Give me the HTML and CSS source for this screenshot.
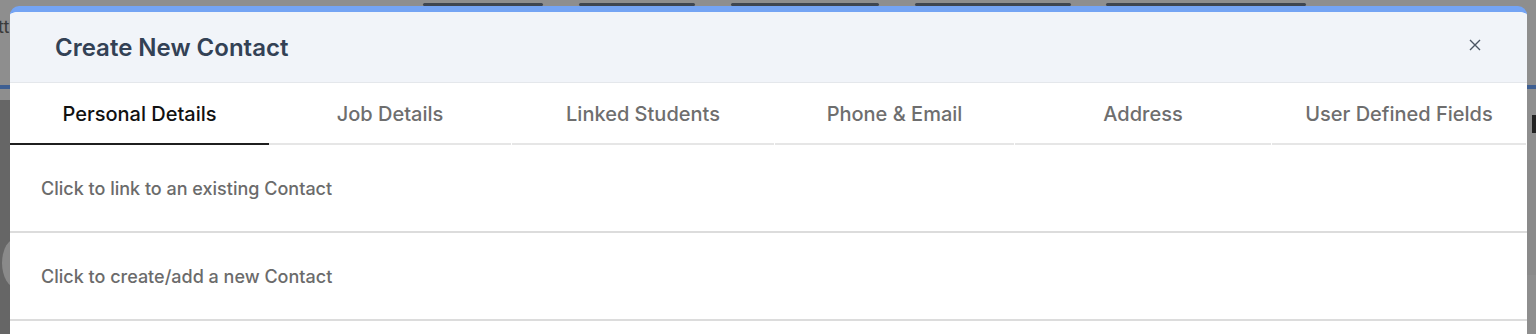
FILE: index.html
```html
<!DOCTYPE html>
<html lang="en">
<head>
<meta charset="utf-8">
<title>Create New Contact</title>
<link rel="stylesheet" href="styles.css">
</head>
<body>
<div class="backdrop">
  <span class="bg-text">tt</span>
  <span class="bg-btn b1"></span>
  <span class="bg-btn b2"></span>
  <span class="bg-btn b3"></span>
  <span class="bg-btn b4"></span>
  <span class="bg-btn b5"></span>
  <span class="bg-stripe left"></span>
  <span class="bg-stripe right"></span>
  <span class="bg-panel left"></span>
  <span class="bg-panel right"></span>
  <span class="bg-mark"></span>
  <span class="bg-circle"></span>
</div>
<div class="modal">
  <div class="modal-header">
    <h2 class="modal-title">Create New Contact</h2>
    <button class="close-btn" aria-label="Close">
      <svg width="12" height="12" viewBox="0 0 12 12"><path d="M1 1L11 11M11 1L1 11" stroke="#4b5563" stroke-width="1.4" fill="none"/></svg>
    </button>
  </div>
  <div class="tabs">
    <div class="tab active">Personal Details</div>
    <div class="tab">Job Details</div>
    <div class="tab">Linked Students</div>
    <div class="tab">Phone &amp; Email</div>
    <div class="tab">Address</div>
    <div class="tab">User Defined Fields</div>
  </div>
  <div class="row">Click to link to an existing Contact</div>
  <div class="row">Click to create/add a new Contact</div>
</div>
</body>
</html>
```
FILE: styles.css
```css
* { box-sizing: border-box; }
html, body {
  margin: 0;
  padding: 0;
  width: 1536px;
  height: 334px;
  overflow: hidden;
}
body {
  background: #8e8e8e;
  font-family: Inter, "Noto Sans", sans-serif;
  position: relative;
  padding-top: 6px;
  padding-left: 10px;
}
.backdrop {
  position: absolute;
  inset: 0;
}
.bg-text {
  position: absolute;
  left: -2px;
  top: 16px;
  font-size: 18px;
  color: #3a3a3a;
}
.bg-btn {
  position: absolute;
  top: 3px;
  height: 3px;
  background: #3f4650;
  border-radius: 2px;
}
.b1 { left: 423px; width: 120px; }
.b2 { left: 579px; width: 116px; }
.b3 { left: 731px; width: 148px; }
.b4 { left: 915px; width: 156px; }
.b5 { left: 1106px; width: 200px; }
.bg-stripe {
  position: absolute;
  top: 85px;
  height: 4px;
  background: #3e5f92;
}
.bg-stripe.left { left: 0; width: 10px; }
.bg-stripe.right { left: 1527px; width: 9px; }
.bg-panel {
  position: absolute;
  background: #7a7a7a;
}
.bg-panel.left { left: 0; top: 100px; width: 10px; height: 234px; background: #666; }
.bg-panel.right { left: 1527px; top: 160px; width: 9px; height: 115px; background: #8a8a8a; }
.bg-mark {
  position: absolute;
  left: 1532px;
  top: 115px;
  width: 4px;
  height: 18px;
  background: #222;
}
.bg-circle {
  position: absolute;
  left: 2px;
  top: 238px;
  width: 30px;
  height: 50px;
  border-radius: 50%;
  background: #8a8a8a;
}
.modal {
  position: relative;
  width: 1517px;
  height: 328px;
  background: #fff;
  border-top: 6px solid #74a4f4;
  border-radius: 9px 9px 0 0;
  overflow: hidden;
}
.modal-header {
  height: 71px;
  background: #f1f4f9;
  border-bottom: 1px solid #e4e7eb;
  display: flex;
  align-items: center;
  justify-content: space-between;
  padding: 0 46px 0 45px;
}
.modal-title {
  margin: 0;
  font-size: 24px;
  font-weight: 600;
  color: #334155;
}
.close-btn {
  border: 0;
  background: transparent;
  padding: 0;
  width: 12px;
  height: 12px;
  display: flex;
  align-items: center;
  justify-content: center;
  cursor: pointer;
  margin-top: -4px;
}
.tabs {
  display: grid;
  grid-template-columns: 259fr 243fr 263fr 240fr 257fr 255fr;
}
.tab {
  height: 62px;
  display: flex;
  align-items: center;
  justify-content: center;
  font-size: 20px;
  font-weight: 500;
  color: #6e6e6e;
  border-bottom: 2px solid #e6e6e6;
  margin-right: 1px;
  padding-top: 2px;
}
.tab.active {
  color: #111;
  border-bottom-color: #1f1f1f;
  margin-right: 0;
}
.row {
  height: 88px;
  border-bottom: 2px solid #dcdcdc;
  display: flex;
  align-items: center;
  padding-left: 31px;
  font-size: 18px;
  font-weight: 500;
  color: #6b6b6b;
}
```
